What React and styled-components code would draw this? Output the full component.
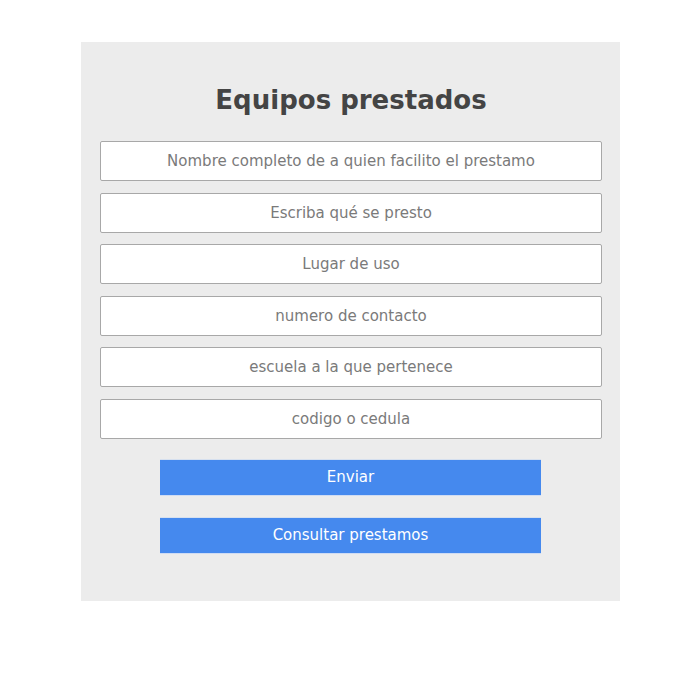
import React from "react";
import styled, { createGlobalStyle } from "styled-components";

const Global = createGlobalStyle`
  html, body { margin: 0; padding: 0; background: #ffffff; }
  body { font-family: "DejaVu Sans", "Noto Sans", sans-serif; }
  * { box-sizing: border-box; }
`;

const Page = styled.div`
  padding: 42px 0 0 81px;
`;

const Card = styled.div`
  width: 539px;
  height: 559px;
  background: #ececec;
  padding: 0 18px 0 19px;
  display: flex;
  flex-direction: column;
  align-items: center;
`;

const Title = styled.h1`
  margin: 41px 0 0;
  height: 58px;
  font-size: 26px;
  font-weight: bold;
  color: #444444;
  line-height: 34px;
  text-align: center;
`;

const Form = styled.form`
  width: 100%;
  display: flex;
  flex-direction: column;
  align-items: center;
`;

const Fields = styled.div`
  width: 100%;
  display: flex;
  flex-direction: column;
  gap: 11.6px;
`;

const Field = styled.input`
  width: 100%;
  height: 40px;
  border: 1px solid #a8a8a8;
  border-radius: 2px;
  background: #ffffff;
  text-align: center;
  font-family: inherit;
  font-size: 15px;
  color: #555;
  outline: none;
  &::placeholder { color: #7a7a7a; }
`;

const Actions = styled.div`
  margin-top: 20px;
  margin-right: 1px;
  display: flex;
  flex-direction: column;
  gap: 21px;
`;

const Button = styled.button`
  width: 381px;
  height: 37px;
  border: none;
  border-top: 1px solid #d6e0ef;
  border-bottom: 1px solid #cfdcf3;
  background: #4589ee;
  color: #ffffff;
  font-family: inherit;
  font-size: 15px;
  cursor: pointer;
`;

const fields = [
  "Nombre completo de a quien facilito el prestamo",
  "Escriba qué se presto",
  "Lugar de uso",
  "numero de contacto",
  "escuela a la que pertenece",
  "codigo o cedula",
];

export default function App() {
  return (
    <Page>
      <Global />
      <Card>
        <Title>Equipos prestados</Title>
        <Form onSubmit={(e) => e.preventDefault()}>
          <Fields>
            {fields.map((f) => (
              <Field key={f} placeholder={f} />
            ))}
          </Fields>
          <Actions>
            <Button type="submit">Enviar</Button>
            <Button type="button">Consultar prestamos</Button>
          </Actions>
        </Form>
      </Card>
    </Page>
  );
}
